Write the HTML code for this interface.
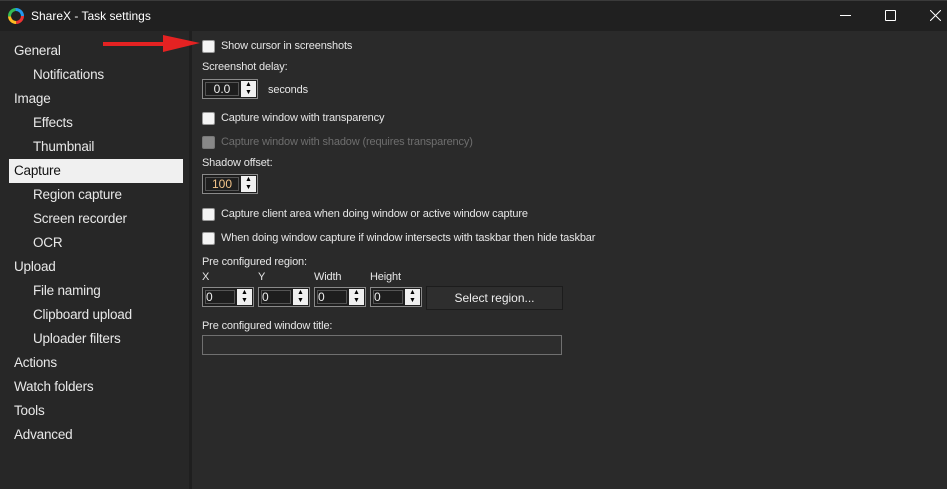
<!DOCTYPE html><html><head><style>
body{margin:0;width:947px;height:489px;overflow:hidden;background:#2a2a2a;font-family:"Liberation Sans",sans-serif;position:relative}
.t{position:absolute;white-space:nowrap}
#tb{position:absolute;left:0;top:0;width:947px;height:31px;background:#202020;border-top:1px solid #3a3a3a;box-sizing:border-box}
#side{position:absolute;left:0;top:31px;width:189px;height:458px;background:#272727;border-right:3px solid #1f1f1f}
.n{position:absolute;color:#e8e8e8;font-size:13.5px;letter-spacing:-0.2px}
.c{position:absolute;color:#e6e6e6;font-size:11px;letter-spacing:-0.15px;white-space:nowrap}
.cb{position:absolute;width:11px;height:11px;background:#f4f4f4;border:1px solid #999;border-radius:2px}
.num{position:absolute;height:20px;background:#1e1e1e;border:1px solid #8a8a8a;box-sizing:border-box}
.num .in{position:absolute;left:2px;top:2px;bottom:2px;right:18px;border:1px solid #555;color:#eee;font-size:12px;line-height:13px;text-align:center}
.num .sp{position:absolute;right:1px;top:1px;width:15px;bottom:1px;background:#f0f0f0;font-size:7px;color:#000;text-align:center;line-height:8px}
</style></head><body>
<div id="tb">
<svg style="position:absolute;left:8px;top:7px" width="16" height="16" viewBox="0 0 16 16"><circle cx="8" cy="8" r="6.5" fill="none" stroke="#e33" stroke-width="3" stroke-dasharray="10 30"/><circle cx="8" cy="8" r="6.5" fill="none" stroke="#fb2" stroke-width="3" stroke-dasharray="0 10 10 30"/><circle cx="8" cy="8" r="6.5" fill="none" stroke="#3b5" stroke-width="3" stroke-dasharray="0 20 10 30"/><circle cx="8" cy="8" r="6.5" fill="none" stroke="#29e" stroke-width="3" stroke-dasharray="0 30 11 30"/></svg>
<div class="t" style="left:31px;top:8px;color:#fff;font-size:12px">ShareX - Task settings</div>
<div style="position:absolute;left:840px;top:14px;width:11px;height:1px;background:#fff"></div>
<div style="position:absolute;left:885px;top:9px;width:9px;height:9px;border:1px solid #fff;border-radius:1px"></div>
<svg style="position:absolute;left:930px;top:9px" width="11" height="11"><path d="M0 0L11 11M11 0L0 11" stroke="#fff" stroke-width="1"/></svg>
</div>
<div id="side">
<div class="n" style="left:14px;top:12px">General</div>
<div class="n" style="left:33px;top:36px">Notifications</div>
<div class="n" style="left:14px;top:60px">Image</div>
<div class="n" style="left:33px;top:84px">Effects</div>
<div class="n" style="left:33px;top:108px">Thumbnail</div>
<div style="position:absolute;left:9px;top:128px;width:174px;height:24px;background:#f0f0f0"></div>
<div class="n" style="left:14px;top:132px;color:#111">Capture</div>
<div class="n" style="left:33px;top:156px">Region capture</div>
<div class="n" style="left:33px;top:180px">Screen recorder</div>
<div class="n" style="left:33px;top:204px">OCR</div>
<div class="n" style="left:14px;top:228px">Upload</div>
<div class="n" style="left:33px;top:252px">File naming</div>
<div class="n" style="left:33px;top:276px">Clipboard upload</div>
<div class="n" style="left:33px;top:300px">Uploader filters</div>
<div class="n" style="left:14px;top:324px">Actions</div>
<div class="n" style="left:14px;top:348px">Watch folders</div>
<div class="n" style="left:14px;top:372px">Tools</div>
<div class="n" style="left:14px;top:396px">Advanced</div>
</div>
<svg style="position:absolute;left:103px;top:33px" width="100" height="24"><path d="M0 11H62" stroke="#e42222" stroke-width="4"/><path d="M60 2L97 10L60 19Z" fill="#e42222"/></svg>
<div class="cb" style="left:202px;top:40px"></div><div class="c" style="left:221px;top:40px">Show cursor in screenshots</div>
<div class="c" style="left:202px;top:61px">Screenshot delay:</div>
<div class="num" style="left:202px;top:79px;width:56px"><div class="in">0.0</div><div class="sp">▲<br>▼</div></div>
<div class="c" style="left:268px;top:84px">seconds</div>
<div class="cb" style="left:202px;top:112px"></div><div class="c" style="left:221px;top:112px">Capture window with transparency</div>
<div class="cb" style="left:202px;top:136px;background:#888;border-color:#777"></div><div class="c" style="left:221px;top:136px;color:#6e6e6e">Capture window with shadow (requires transparency)</div>
<div class="c" style="left:202px;top:157px">Shadow offset:</div>
<div class="num" style="left:202px;top:174px;width:56px"><div class="in" style="color:#f3c48a">100</div><div class="sp">▲<br>▼</div></div>
<div class="cb" style="left:202px;top:208px"></div><div class="c" style="left:221px;top:208px">Capture client area when doing window or active window capture</div>
<div class="cb" style="left:202px;top:232px"></div><div class="c" style="left:221px;top:232px">When doing window capture if window intersects with taskbar then hide taskbar</div>
<div class="c" style="left:202px;top:256px">Pre configured region:</div>
<div class="c" style="left:202px;top:271px">X</div><div class="c" style="left:258px;top:271px">Y</div><div class="c" style="left:314px;top:271px">Width</div><div class="c" style="left:370px;top:271px">Height</div>
<div class="num" style="left:202px;top:287px;width:52px"><div class="in" style="text-align:left">0</div><div class="sp">▲<br>▼</div></div>
<div class="num" style="left:258px;top:287px;width:52px"><div class="in" style="text-align:left">0</div><div class="sp">▲<br>▼</div></div>
<div class="num" style="left:314px;top:287px;width:52px"><div class="in" style="text-align:left">0</div><div class="sp">▲<br>▼</div></div>
<div class="num" style="left:370px;top:287px;width:52px"><div class="in" style="text-align:left">0</div><div class="sp">▲<br>▼</div></div>
<div style="position:absolute;left:426px;top:286px;width:135px;height:22px;background:#2e2e2e;border:1px solid #1c1c1c;color:#eee;font-size:12px;text-align:center;line-height:22px">Select region...</div>
<div class="c" style="left:202px;top:320px">Pre configured window title:</div>
<div style="position:absolute;left:202px;top:335px;width:358px;height:18px;background:#2d2d2d;border:1px solid #707070"></div>
</body></html>
